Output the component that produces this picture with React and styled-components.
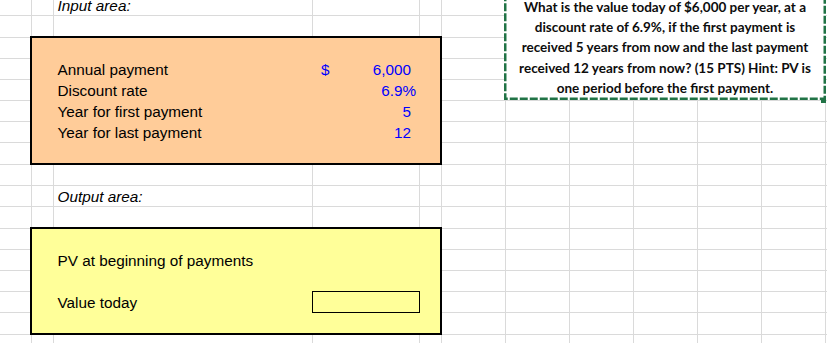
import React from "react";
import styled, { createGlobalStyle } from "styled-components";

// Column widths and row heights of the worksheet, in pixels (gridline included).
const COLS = [32, 22, 259, 107, 22, 64, 64, 64, 64, 64, 64, 40];
const ROWS = [16, 22, 21, 21, 21, 21, 21, 22, 21, 21, 22, 21, 21, 21, 21, 22, 20];

const GlobalStyle = createGlobalStyle`
  html, body {
    margin: 0;
    padding: 0;
    background: #ffffff;
    overflow: hidden;
  }
  * { box-sizing: border-box; }
`;

const Sheet = styled.div`
  position: relative;
  display: grid;
  grid-template-columns: ${COLS.map((c) => `${c}px`).join(" ")};
  grid-template-rows: ${ROWS.map((r) => `${r}px`).join(" ")};
  width: 827px;
  height: 343px;
  overflow: hidden;
  background: #ffffff;
  font-family: "Liberation Sans", Arial, sans-serif;
  font-size: 15.3px;
  color: #000000;
`;

const GridCell = styled.div`
  grid-column: ${(p) => p.$col};
  grid-row: ${(p) => p.$row};
  border-right: 1px solid #dadada;
  border-bottom: 1px solid #dadada;
`;

// A bordered, filled block of cells (thick outside border).
const RangeBox = styled.div`
  grid-column: ${(p) => p.$cols};
  grid-row: ${(p) => p.$rows};
  margin: -2px 0 0 -2px;
  background: ${(p) => p.$fill};
  border: 2px solid #000000;
`;

// Thin-bordered answer cell.
const AnswerField = styled.div`
  grid-column: ${(p) => p.$col};
  grid-row: ${(p) => p.$row};
  margin: -1px 0 0 -1px;
  border: 1px solid #000000;
`;

const CellText = styled.div`
  grid-column: ${(p) => p.$col};
  grid-row: ${(p) => p.$row};
  display: flex;
  align-items: flex-end;
  justify-content: ${(p) =>
    p.$align === "right"
      ? "flex-end"
      : p.$align === "split"
      ? "space-between"
      : "flex-start"};
  padding: 0 ${(p) => p.$pr ?? 0}px 2px ${(p) => p.$pl ?? 3.5}px;
  line-height: 17px;
  white-space: nowrap;
  font-style: ${(p) => (p.$italic ? "italic" : "normal")};
  color: ${(p) => (p.$blue ? "#0000ff" : "#000000")};
`;

// Floating text box with a dashed selection outline.
const Callout = styled.div`
  position: absolute;
  left: 504px;
  top: -6px;
  width: 322px;
  height: 106px;
  background: #ffffff;
  display: flex;
  flex-direction: column;
  justify-content: flex-end;
  align-items: center;
  padding: 0 0 2px;
  font-family: Lato, "Open Sans", sans-serif;
  font-weight: 700;
  font-size: 13.5px;
  line-height: 20.25px;
  color: #0d0d0d;
  text-align: center;
`;

const Outline = styled.svg`
  position: absolute;
  inset: 0;
  width: 100%;
  height: 100%;
  pointer-events: none;
`;

const Handle = styled.div`
  position: absolute;
  right: 0;
  bottom: -3px;
  width: 5px;
  height: 5px;
  background: #217346;
`;

const CalloutText = styled.p`
  position: relative;
  margin: 0;
  white-space: nowrap;
`;

const inputs = [
  { row: 4, label: "Annual payment", sign: "$", value: "6,000", pr: 9 },
  { row: 5, label: "Discount rate", value: "6.9%", pr: 4 },
  { row: 6, label: "Year for first payment", value: "5", pr: 9 },
  { row: 7, label: "Year for last payment", value: "12", pr: 9 },
];

const question = [
  "What is the value today of $6,000 per year, at a",
  "discount rate of 6.9%, if the first payment is",
  "received 5 years from now and the last payment",
  "received 12 years from now? (15 PTS) Hint: PV is",
  "one period before the first payment.",
];

export default function App() {
  const cells = [];
  ROWS.forEach((_, r) =>
    COLS.forEach((__, c) =>
      cells.push(<GridCell key={`${r}-${c}`} $row={r + 1} $col={c + 1} />)
    )
  );

  return (
    <>
      <GlobalStyle />
      <Sheet>
        {cells}

        <RangeBox $cols="2 / 6" $rows="3 / 9" $fill="#ffcc99" />
        <RangeBox $cols="2 / 6" $rows="12 / 17" $fill="#ffff99" />
        <AnswerField $col={4} $row={15} />

        <CellText $col={3} $row={1} $italic>
          Input area:
        </CellText>
        {inputs.map((item) => (
          <React.Fragment key={item.label}>
            <CellText $col={3} $row={item.row}>
              {item.label}
            </CellText>
            <CellText
              $col={4}
              $row={item.row}
              $blue
              $align={item.sign ? "split" : "right"}
              $pl={8}
              $pr={item.pr}
            >
              {item.sign && <span>{item.sign}</span>}
              <span>{item.value}</span>
            </CellText>
          </React.Fragment>
        ))}

        <CellText $col={3} $row={10} $italic>
          Output area:
        </CellText>
        <CellText $col={3} $row={13}>
          PV at beginning of payments
        </CellText>
        <CellText $col={3} $row={15}>
          Value today
        </CellText>

        <Callout>
          <Outline viewBox="0 0 322 106" preserveAspectRatio="none">
            <rect
              x="1.25"
              y="1.25"
              width="319.5"
              height="103.5"
              fill="none"
              stroke="#217346"
              strokeWidth="2.5"
              strokeDasharray="8 2"
            />
          </Outline>
          <Handle />
          <CalloutText>
            {question.map((line, i) => (
              <React.Fragment key={i}>
                {line}
                {i < question.length - 1 && <br />}
              </React.Fragment>
            ))}
          </CalloutText>
        </Callout>
      </Sheet>
    </>
  );
}
